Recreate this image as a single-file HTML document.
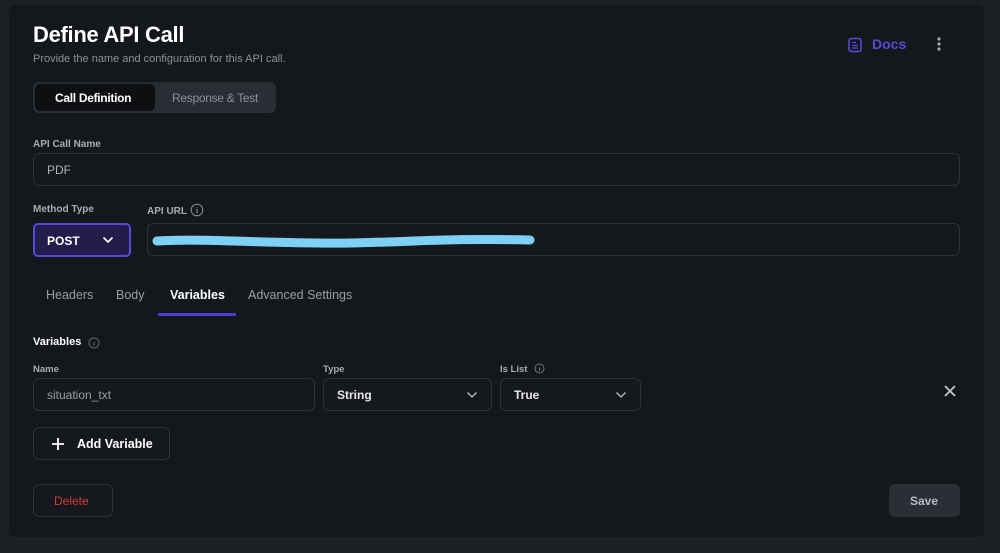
<!DOCTYPE html>
<html><head><meta charset="utf-8"><style>
*{box-sizing:border-box;margin:0;padding:0}
body{width:1000px;height:553px;background:#1c1f23;font-family:"Liberation Sans",sans-serif;position:relative;overflow:hidden;color:#fff}
.panel{position:absolute;left:9px;top:5px;width:975px;height:532px;background:#14171b;border-radius:6px}
.a{position:absolute}
.lbl{font-size:10px;font-weight:bold;color:#a9adb3}
.box{position:absolute;border:1px solid #2e3238;border-radius:6px;background:#15181c}
.t{position:absolute;font-size:12px}
</style></head><body>
<div class="panel"></div>
<div class="a" style="left:33px;top:22px;font-size:22px;font-weight:bold;letter-spacing:-0.3px">Define API Call</div>
<div class="a" style="left:33px;top:53px;font-size:11px;color:#8d9197">Provide the name and configuration for this API call.</div>
<svg class="a" style="left:847px;top:37px" width="16" height="16" viewBox="0 0 16 16"><rect x="2" y="1.5" width="12" height="13" rx="2.5" fill="none" stroke="#5a48d8" stroke-width="1.6"/><path d="M5 5.5h4M5 8.5h6M5 11h6" stroke="#5a48d8" stroke-width="1.3"/></svg>
<div class="a" style="left:872px;top:36px;font-size:14px;font-weight:bold;color:#5a48d8">Docs</div>
<svg class="a" style="left:936px;top:36px" width="6" height="16"><circle cx="3" cy="3" r="1.6" fill="#aaa"/><circle cx="3" cy="8" r="1.6" fill="#aaa"/><circle cx="3" cy="13" r="1.6" fill="#aaa"/></svg>
<div class="a" style="left:33px;top:82px;width:243px;height:31px;background:#2a2e34;border-radius:6px"></div>
<div class="a" style="left:35px;top:84px;width:120px;height:27px;background:#0d0f11;border-radius:5px"></div>
<div class="t" style="left:55px;top:91px;font-weight:bold;letter-spacing:-0.3px">Call Definition</div>
<div class="t" style="left:172px;top:91px;color:#8d9197;letter-spacing:-0.3px">Response &amp; Test</div>
<div class="a lbl" style="left:33px;top:139px">API Call Name</div>
<div class="box" style="left:33px;top:153px;width:927px;height:33px"></div>
<div class="t" style="left:47px;top:163px;color:#b0b4ba">PDF</div>
<div class="a lbl" style="left:33px;top:204px">Method Type</div>
<div class="a lbl" style="left:147px;top:206px">API URL</div>
<svg class="a" style="left:190px;top:203px" width="14" height="14"><circle cx="7" cy="7" r="5.8" fill="none" stroke="#8d9197" stroke-width="1"/><path d="M7 6v4M7 4v.5" stroke="#8d9197" stroke-width="1.2"/></svg>
<div class="a" style="left:33px;top:223px;width:98px;height:34px;background:#221d4a;border:2px solid #5a48d8;border-radius:5px"></div>
<div class="t" style="left:47px;top:234px;font-weight:bold">POST</div>
<svg class="a" style="left:102px;top:235px" width="12" height="10"><path d="M1.5 2.5l4.5 4.5 4.5-4.5" fill="none" stroke="#fff" stroke-width="1.6"/></svg>
<div class="box" style="left:147px;top:223px;width:813px;height:33px"></div>
<svg class="a" style="left:150px;top:230px" width="385" height="22"><path d="M7 11 C60 8 120 14 200 13 C260 12 300 8 380 10" fill="none" stroke="#7fd0f5" stroke-width="9" stroke-linecap="round"/></svg>
<div class="t" style="left:46px;top:288px;color:#9a9ea4;font-size:12.5px">Headers</div>
<div class="t" style="left:116px;top:288px;color:#9a9ea4;font-size:12.5px">Body</div>
<div class="t" style="left:170px;top:288px;font-weight:bold;font-size:12.5px">Variables</div>
<div class="t" style="left:248px;top:288px;color:#9a9ea4;font-size:12.5px">Advanced Settings</div>
<div class="a" style="left:158px;top:313px;width:78px;height:3px;background:#4b3fd0"></div>
<div class="a" style="left:33px;top:336px;font-size:11px;font-weight:bold">Variables</div>
<svg class="a" style="left:88px;top:337px" width="12" height="12"><circle cx="6" cy="6" r="5" fill="none" stroke="#666" stroke-width="1"/><path d="M6 5v3.5" stroke="#666"/></svg>
<div class="a lbl" style="left:33px;top:364px;font-size:9.5px">Name</div>
<div class="a lbl" style="left:323px;top:364px;font-size:9.5px">Type</div>
<div class="a lbl" style="left:500px;top:364px;font-size:9.5px">Is List</div>
<svg class="a" style="left:534px;top:363px" width="11" height="11"><circle cx="5.5" cy="5.5" r="4.5" fill="none" stroke="#777"/><path d="M5.5 4.5v3.5" stroke="#777"/></svg>
<div class="box" style="left:33px;top:378px;width:282px;height:33px"></div>
<div class="t" style="left:47px;top:388px;color:#9a9ea4">situation_txt</div>
<div class="box" style="left:323px;top:378px;width:169px;height:33px"></div>
<div class="t" style="left:337px;top:388px;font-weight:bold;color:#e8e8e8">String</div>
<svg class="a" style="left:466px;top:390px" width="12" height="10"><path d="M1.5 2.5l4.5 4.5 4.5-4.5" fill="none" stroke="#bbb" stroke-width="1.3"/></svg>
<div class="box" style="left:500px;top:378px;width:141px;height:33px"></div>
<div class="t" style="left:514px;top:388px;font-weight:bold;color:#e8e8e8">True</div>
<svg class="a" style="left:615px;top:390px" width="12" height="10"><path d="M1.5 2.5l4.5 4.5 4.5-4.5" fill="none" stroke="#bbb" stroke-width="1.3"/></svg>
<svg class="a" style="left:943px;top:384px" width="14" height="14"><path d="M2 2l10 10M12 2L2 12" stroke="#c4c7cc" stroke-width="1.8"/></svg>
<div class="box" style="left:33px;top:427px;width:137px;height:33px"></div>
<svg class="a" style="left:51px;top:437px" width="14" height="14"><path d="M7 1v12M1 7h12" stroke="#fff" stroke-width="1.8"/></svg>
<div class="t" style="left:77px;top:437px;font-weight:bold;font-size:12.5px">Add Variable</div>
<div class="box" style="left:33px;top:484px;width:80px;height:33px"></div>
<div class="t" style="left:54px;top:494px;color:#d23a3a">Delete</div>
<div class="a" style="left:889px;top:484px;width:71px;height:33px;background:#2a2e35;border-radius:6px"></div>
<div class="t" style="left:910px;top:494px;font-weight:bold;color:#b8bcc2">Save</div>
</body></html>
